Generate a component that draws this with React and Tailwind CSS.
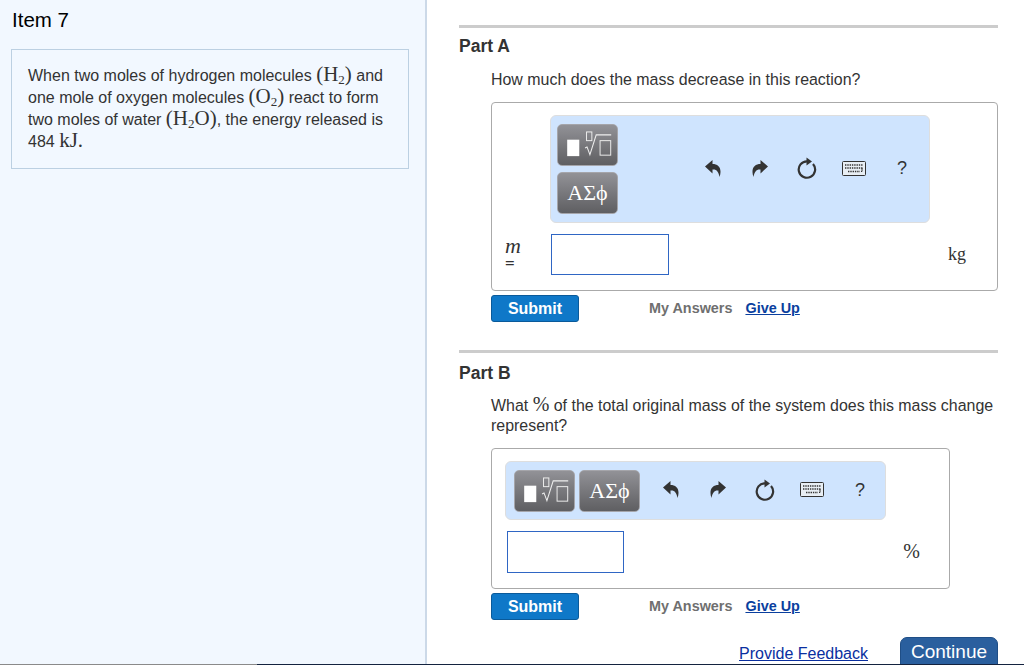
import React from 'react'

const Undo = ({ flip }) => (
  <svg width="18" height="19" viewBox="0 0 18 19" className={flip ? '-scale-x-100' : ''}>
    <path d="M1 7.5 L8.5 1 V5 C14.5 5 18.5 9.5 15.5 18 C14.5 12.5 12.5 10 8.5 10.5 V14.5 Z" fill="#333" />
  </svg>
)

const Refresh = () => (
  <svg width="20" height="22" viewBox="0 0 20 22">
    <path d="M10 4.3 A8.2 8.2 0 1 0 16 7" fill="none" stroke="#333" strokeWidth="2.2" />
    <path d="M9.5 0.5 L15 4.5 L9.5 8.5 Z" fill="#333" />
  </svg>
)

const Keyboard = () => (
  <svg width="24" height="15" viewBox="0 0 24 15">
    <rect x="0.5" y="0.5" width="23" height="14" rx="1" fill="#e8eef4" stroke="#333" />
    <path d="M3 4 H21 M3 7 H21" stroke="#333" strokeWidth="1.4" strokeDasharray="1.4 0.9" />
    <path d="M6 10.5 H18" stroke="#333" strokeWidth="1.4" strokeDasharray="1.4 0.9" />
    <path d="M20 7 V10.5 H19" stroke="#333" fill="none" />
  </svg>
)

const ToolIcons = () => (
  <div className="flex items-center mb-[2px]">
    <Undo />
    <div className="ml-[29px]"><Undo flip /></div>
    <div className="ml-[28px]"><Refresh /></div>
    <div className="ml-[25px]"><Keyboard /></div>
    <span className="ml-[31px] text-[18px] text-[#333] leading-none">?</span>
  </div>
)

const ToolBtn = ({ children }) => (
  <div className="w-[61px] h-[42px] rounded-[5px] border border-[#a5a5aa] bg-linear-to-b from-[#929297] to-[#5f5f62] flex items-center justify-center">
    {children}
  </div>
)

const SqrtBtn = () => (
  <ToolBtn>
    <svg width="61" height="42" viewBox="0 0 61 42">
      <rect x="9.5" y="15.5" width="12.5" height="17" fill="#fff" />
      <rect x="29.5" y="7.5" width="5.5" height="9" fill="none" stroke="#eee" />
      <path d="M28 24 L30 23 L33 31 L39.5 10.5 H55" fill="none" stroke="#eee" strokeWidth="1.1" />
      <rect x="43.5" y="16.5" width="11" height="15" fill="none" stroke="#eee" />
    </svg>
  </ToolBtn>
)

const GreekBtn = () => (
  <ToolBtn>
    <span className="text-white text-[22px] leading-none font-['Liberation_Serif',serif]">ΑΣϕ</span>
  </ToolBtn>
)

const Actions = () => (
  <div className="flex items-center mt-1">
    <button className="w-[88px] h-[27px] rounded-[3px] bg-[#0f78c8] border border-[#0a5a9a] text-white font-bold text-[16px] leading-none">
      Submit
    </button>
    <span className="ml-[70px] text-[14.4px] font-bold text-[#6f6f6f]">My Answers</span>
    <a className="ml-[13px] text-[14.4px] font-bold text-[#0a3f9e] underline">Give Up</a>
  </div>
)

const M = ({ children }) => <span className="font-['Liberation_Serif',serif] text-[21px] leading-[0]">{children}</span>
const Sub = ({ children }) => <sub className="text-[13px]">{children}</sub>

const App = () => {
  return (
    <div className="w-[1024px] h-[665px] overflow-hidden flex flex-col bg-white font-['Liberation_Sans',Arial,sans-serif]">
      <div className="flex flex-1 min-h-0">
        {/* question side */}
        <div className="w-[427px] shrink-0 bg-[#f2f8ff] border-r-2 border-[#ccd9e8] pt-[9px] pl-[11px]">
          <h1 className="ml-px text-[20.5px] leading-[22px] text-black">Item 7</h1>
          <div className="mt-[18px] w-[398px] h-[120px] border border-[#bcd0e2] pt-[15px] pl-4 text-[16px] leading-[22px] text-[#333] whitespace-nowrap">
            When two moles of hydrogen molecules <M>(H<Sub>2</Sub>)</M> and<br />
            one mole of oxygen molecules <M>(O<Sub>2</Sub>)</M> react to form<br />
            two moles of water <M>(H<Sub>2</Sub>O)</M>, the energy released is<br />
            484 <M>kJ.</M>
          </div>
        </div>

        {/* parts */}
        <div className="flex-1 min-w-0 pl-8 pr-[26px] pt-[25px] text-[#333]">
          <div className="h-[3px] bg-[#cccccc]" />
          <h2 className="mt-[8px] text-[17.5px] leading-[20px] font-bold">Part A</h2>
          <div className="pl-8">
            <p className="mt-[14px] text-[15.95px] leading-5">How much does the mass decrease in this reaction?</p>
            <div className="mt-[12px] h-[189px] border border-[#aaaaaa] rounded-[4px] pt-3 pl-[58px] pr-[30px]">
              <div className="w-[380px] h-[108px] bg-[#cfe4fe] rounded-[6px] border border-[#dedede] pl-[6px] flex items-center">
                <div className="flex flex-col gap-[6px]">
                  <SqrtBtn />
                  <GreekBtn />
                </div>
                <div className="ml-[86px]"><ToolIcons /></div>
              </div>
              <div className="flex items-center mt-[11px]">
                <div className="w-[33px] -ml-[45px] mr-[13px] flex flex-col items-start font-['Liberation_Serif',serif] text-[#333]">
                  <i className="text-[22px] leading-[18px]">m</i>
                  <span className="text-[17px] font-bold leading-[18px]">=</span>
                </div>
                <div className="w-[118px] h-[41px] border border-[#2f66c4]" />
                <span className="ml-auto mr-[1px] font-['Liberation_Serif',serif] text-[18px]">kg</span>
              </div>
            </div>
            <Actions />
          </div>

          <div className="mt-[28px] h-[3px] bg-[#cccccc]" />
          <h2 className="mt-[10px] text-[17.5px] leading-[20px] font-bold">Part B</h2>
          <div className="pl-8">
            <p className="mt-[11px] text-[15.95px] leading-5">
              What <span className="inline-block font-['Liberation_Serif',serif] text-[20px] leading-none">%</span> of the total original mass of the system does this mass change represent?
            </p>
            <div className="mt-[12px] w-[459px] h-[141px] border border-[#aaaaaa] rounded-[4px] pt-3 pl-[13px]">
              <div className="w-[381px] h-[59px] bg-[#cfe4fe] rounded-[6px] border border-[#dedede] pl-2 flex items-center">
                <SqrtBtn />
                <div className="ml-[4px]"><GreekBtn /></div>
                <div className="ml-[22px]"><ToolIcons /></div>
              </div>
              <div className="flex items-center mt-[11px] -ml-[13px] pl-[15px] pr-[29px]">
                <div className="w-[117px] h-[42px] border border-[#2f66c4]" />
                <span className="ml-auto mb-[3px] font-['Liberation_Serif',serif] text-[20px]">%</span>
              </div>
            </div>
            <Actions />
          </div>

          <div className="flex items-start justify-end mt-[17px]">
            <a className="mt-[5px] text-[16px] text-[#0a2fa0] underline">Provide Feedback</a>
            <button className="ml-8 w-[98px] h-[40px] pb-[11px] rounded-t-[7px] bg-[#2a5f9e] border border-[#1f4e86] text-white text-[19px] leading-none">
              Continue
            </button>
          </div>
        </div>
      </div>
      {/* strip of whatever sat below the window */}
      <div className="h-px shrink-0 flex">
        <div className="w-[257px] bg-[#8a8a8a]" />
        <div className="flex-1 bg-[#14233f]" />
      </div>
    </div>
  )
}

export default App
